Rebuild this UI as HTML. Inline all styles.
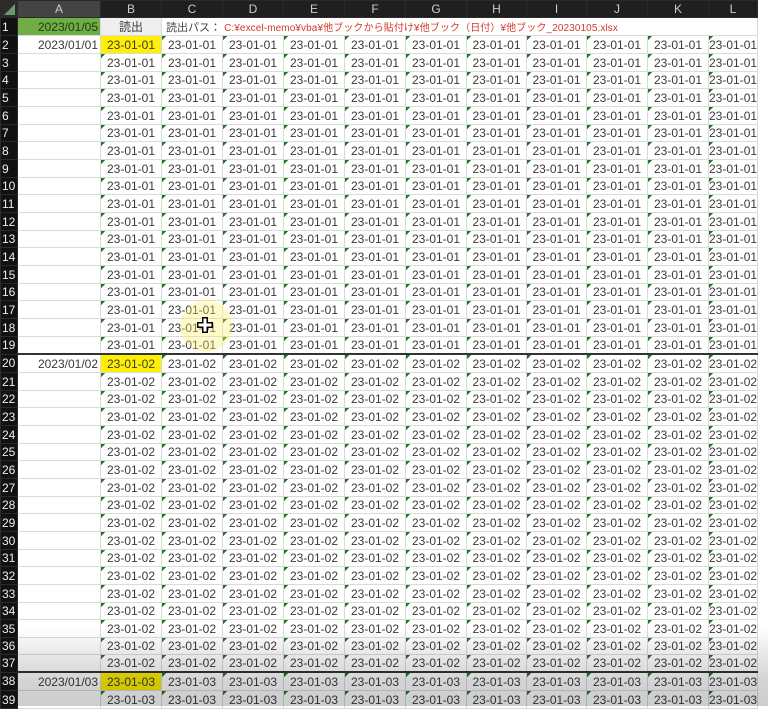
<!DOCTYPE html>
<html><head><meta charset="utf-8"><style>
html,body{margin:0;padding:0;width:768px;height:706px;overflow:hidden;background:#fff}
table{border-collapse:collapse;table-layout:fixed;font:12px "Liberation Sans","Noto Sans CJK JP",sans-serif;color:#3a3a3a;position:absolute;left:0;top:0}
th{background:#111;color:#ddd;font-weight:normal;font-size:12px;padding:0;text-align:center;border:1px solid #2a2a2a}
thead th{height:16px;background:#1f1f1f;color:#ccc}
thead th.a{background:#444}
tbody th{text-align:left;padding-left:1px;color:#eee;font-size:12px}
td{border:1px solid #dadada;padding:0;text-align:center;white-space:nowrap;overflow:hidden;height:16px;
background:linear-gradient(135deg,#1f7a1f 3px,transparent 3px) no-repeat}
td:first-of-type{background:none;text-align:right;padding-right:2px}
tr.t td,tr.t th{height:17px}
td.y{background:#ffef00}
tr.sep td{border-top:2px solid #333}
.r1 td{background:none}
td.g{background:#70ad47!important;color:#1e3a10}
td.b{background:#efefef}
td.p{text-align:left;padding-left:4px;overflow:visible;color:#444;font-size:11px}
.red{color:#d23a2a;font-size:10px;letter-spacing:0.1px}
#shade{position:absolute;left:17px;top:620px;width:751px;height:86px;background:linear-gradient(#fff0 0,#0000 8px,rgba(0,0,0,.08) 30px,rgba(0,0,0,.17) 60px,rgba(0,0,0,.2) 86px);pointer-events:none}
#hl{position:absolute;left:180px;top:300px;width:52px;height:52px;border-radius:50%;background:rgba(255,240,110,.35)}
#cur{position:absolute;left:197px;top:317px}
</style></head><body>
<table>
<colgroup><col style="width:17px"><col style="width:83px"><col style="width:61px"><col style="width:61px"><col style="width:61px"><col style="width:61px"><col style="width:61px"><col style="width:61px"><col style="width:60px"><col style="width:60px"><col style="width:61px"><col style="width:61px"></colgroup>
<thead><tr><th style="background:#2b2b2b"><svg width="14" height="14" style="display:block;margin:0 auto"><polygon points="13,2 13,13 2,13" fill="#6a9a6a"/></svg></th><th class="a">A</th><th>B</th><th>C</th><th>D</th><th>E</th><th>F</th><th>G</th><th>H</th><th>I</th><th>J</th><th>K</th><th>L</th></tr></thead>
<tbody>
<tr class="r1"><th>1</th><td class="g">2023/01/05</td><td class="b">読出</td><td class="p" colspan="10">読出パス： <span class="red">C:¥excel-memo¥vba¥他ブックから貼付け¥他ブック（日付）¥他ブック_20230105.xlsx</span></td></tr>
<tr class="t"><th>2</th><td>2023/01/01</td><td class="y">23-01-01</td><td>23-01-01</td><td>23-01-01</td><td>23-01-01</td><td>23-01-01</td><td>23-01-01</td><td>23-01-01</td><td>23-01-01</td><td>23-01-01</td><td>23-01-01</td><td>23-01-01</td></tr>
<tr class="t"><th>3</th><td></td><td>23-01-01</td><td>23-01-01</td><td>23-01-01</td><td>23-01-01</td><td>23-01-01</td><td>23-01-01</td><td>23-01-01</td><td>23-01-01</td><td>23-01-01</td><td>23-01-01</td><td>23-01-01</td></tr>
<tr><th>4</th><td></td><td>23-01-01</td><td>23-01-01</td><td>23-01-01</td><td>23-01-01</td><td>23-01-01</td><td>23-01-01</td><td>23-01-01</td><td>23-01-01</td><td>23-01-01</td><td>23-01-01</td><td>23-01-01</td></tr>
<tr class="t"><th>5</th><td></td><td>23-01-01</td><td>23-01-01</td><td>23-01-01</td><td>23-01-01</td><td>23-01-01</td><td>23-01-01</td><td>23-01-01</td><td>23-01-01</td><td>23-01-01</td><td>23-01-01</td><td>23-01-01</td></tr>
<tr class="t"><th>6</th><td></td><td>23-01-01</td><td>23-01-01</td><td>23-01-01</td><td>23-01-01</td><td>23-01-01</td><td>23-01-01</td><td>23-01-01</td><td>23-01-01</td><td>23-01-01</td><td>23-01-01</td><td>23-01-01</td></tr>
<tr><th>7</th><td></td><td>23-01-01</td><td>23-01-01</td><td>23-01-01</td><td>23-01-01</td><td>23-01-01</td><td>23-01-01</td><td>23-01-01</td><td>23-01-01</td><td>23-01-01</td><td>23-01-01</td><td>23-01-01</td></tr>
<tr class="t"><th>8</th><td></td><td>23-01-01</td><td>23-01-01</td><td>23-01-01</td><td>23-01-01</td><td>23-01-01</td><td>23-01-01</td><td>23-01-01</td><td>23-01-01</td><td>23-01-01</td><td>23-01-01</td><td>23-01-01</td></tr>
<tr class="t"><th>9</th><td></td><td>23-01-01</td><td>23-01-01</td><td>23-01-01</td><td>23-01-01</td><td>23-01-01</td><td>23-01-01</td><td>23-01-01</td><td>23-01-01</td><td>23-01-01</td><td>23-01-01</td><td>23-01-01</td></tr>
<tr><th>10</th><td></td><td>23-01-01</td><td>23-01-01</td><td>23-01-01</td><td>23-01-01</td><td>23-01-01</td><td>23-01-01</td><td>23-01-01</td><td>23-01-01</td><td>23-01-01</td><td>23-01-01</td><td>23-01-01</td></tr>
<tr class="t"><th>11</th><td></td><td>23-01-01</td><td>23-01-01</td><td>23-01-01</td><td>23-01-01</td><td>23-01-01</td><td>23-01-01</td><td>23-01-01</td><td>23-01-01</td><td>23-01-01</td><td>23-01-01</td><td>23-01-01</td></tr>
<tr class="t"><th>12</th><td></td><td>23-01-01</td><td>23-01-01</td><td>23-01-01</td><td>23-01-01</td><td>23-01-01</td><td>23-01-01</td><td>23-01-01</td><td>23-01-01</td><td>23-01-01</td><td>23-01-01</td><td>23-01-01</td></tr>
<tr><th>13</th><td></td><td>23-01-01</td><td>23-01-01</td><td>23-01-01</td><td>23-01-01</td><td>23-01-01</td><td>23-01-01</td><td>23-01-01</td><td>23-01-01</td><td>23-01-01</td><td>23-01-01</td><td>23-01-01</td></tr>
<tr class="t"><th>14</th><td></td><td>23-01-01</td><td>23-01-01</td><td>23-01-01</td><td>23-01-01</td><td>23-01-01</td><td>23-01-01</td><td>23-01-01</td><td>23-01-01</td><td>23-01-01</td><td>23-01-01</td><td>23-01-01</td></tr>
<tr class="t"><th>15</th><td></td><td>23-01-01</td><td>23-01-01</td><td>23-01-01</td><td>23-01-01</td><td>23-01-01</td><td>23-01-01</td><td>23-01-01</td><td>23-01-01</td><td>23-01-01</td><td>23-01-01</td><td>23-01-01</td></tr>
<tr><th>16</th><td></td><td>23-01-01</td><td>23-01-01</td><td>23-01-01</td><td>23-01-01</td><td>23-01-01</td><td>23-01-01</td><td>23-01-01</td><td>23-01-01</td><td>23-01-01</td><td>23-01-01</td><td>23-01-01</td></tr>
<tr class="t"><th>17</th><td></td><td>23-01-01</td><td>23-01-01</td><td>23-01-01</td><td>23-01-01</td><td>23-01-01</td><td>23-01-01</td><td>23-01-01</td><td>23-01-01</td><td>23-01-01</td><td>23-01-01</td><td>23-01-01</td></tr>
<tr class="t"><th>18</th><td></td><td>23-01-01</td><td>23-01-01</td><td>23-01-01</td><td>23-01-01</td><td>23-01-01</td><td>23-01-01</td><td>23-01-01</td><td>23-01-01</td><td>23-01-01</td><td>23-01-01</td><td>23-01-01</td></tr>
<tr><th>19</th><td></td><td>23-01-01</td><td>23-01-01</td><td>23-01-01</td><td>23-01-01</td><td>23-01-01</td><td>23-01-01</td><td>23-01-01</td><td>23-01-01</td><td>23-01-01</td><td>23-01-01</td><td>23-01-01</td></tr>
<tr class="t sep"><th>20</th><td>2023/01/02</td><td class="y">23-01-02</td><td>23-01-02</td><td>23-01-02</td><td>23-01-02</td><td>23-01-02</td><td>23-01-02</td><td>23-01-02</td><td>23-01-02</td><td>23-01-02</td><td>23-01-02</td><td>23-01-02</td></tr>
<tr class="t"><th>21</th><td></td><td>23-01-02</td><td>23-01-02</td><td>23-01-02</td><td>23-01-02</td><td>23-01-02</td><td>23-01-02</td><td>23-01-02</td><td>23-01-02</td><td>23-01-02</td><td>23-01-02</td><td>23-01-02</td></tr>
<tr><th>22</th><td></td><td>23-01-02</td><td>23-01-02</td><td>23-01-02</td><td>23-01-02</td><td>23-01-02</td><td>23-01-02</td><td>23-01-02</td><td>23-01-02</td><td>23-01-02</td><td>23-01-02</td><td>23-01-02</td></tr>
<tr class="t"><th>23</th><td></td><td>23-01-02</td><td>23-01-02</td><td>23-01-02</td><td>23-01-02</td><td>23-01-02</td><td>23-01-02</td><td>23-01-02</td><td>23-01-02</td><td>23-01-02</td><td>23-01-02</td><td>23-01-02</td></tr>
<tr class="t"><th>24</th><td></td><td>23-01-02</td><td>23-01-02</td><td>23-01-02</td><td>23-01-02</td><td>23-01-02</td><td>23-01-02</td><td>23-01-02</td><td>23-01-02</td><td>23-01-02</td><td>23-01-02</td><td>23-01-02</td></tr>
<tr><th>25</th><td></td><td>23-01-02</td><td>23-01-02</td><td>23-01-02</td><td>23-01-02</td><td>23-01-02</td><td>23-01-02</td><td>23-01-02</td><td>23-01-02</td><td>23-01-02</td><td>23-01-02</td><td>23-01-02</td></tr>
<tr class="t"><th>26</th><td></td><td>23-01-02</td><td>23-01-02</td><td>23-01-02</td><td>23-01-02</td><td>23-01-02</td><td>23-01-02</td><td>23-01-02</td><td>23-01-02</td><td>23-01-02</td><td>23-01-02</td><td>23-01-02</td></tr>
<tr class="t"><th>27</th><td></td><td>23-01-02</td><td>23-01-02</td><td>23-01-02</td><td>23-01-02</td><td>23-01-02</td><td>23-01-02</td><td>23-01-02</td><td>23-01-02</td><td>23-01-02</td><td>23-01-02</td><td>23-01-02</td></tr>
<tr><th>28</th><td></td><td>23-01-02</td><td>23-01-02</td><td>23-01-02</td><td>23-01-02</td><td>23-01-02</td><td>23-01-02</td><td>23-01-02</td><td>23-01-02</td><td>23-01-02</td><td>23-01-02</td><td>23-01-02</td></tr>
<tr class="t"><th>29</th><td></td><td>23-01-02</td><td>23-01-02</td><td>23-01-02</td><td>23-01-02</td><td>23-01-02</td><td>23-01-02</td><td>23-01-02</td><td>23-01-02</td><td>23-01-02</td><td>23-01-02</td><td>23-01-02</td></tr>
<tr class="t"><th>30</th><td></td><td>23-01-02</td><td>23-01-02</td><td>23-01-02</td><td>23-01-02</td><td>23-01-02</td><td>23-01-02</td><td>23-01-02</td><td>23-01-02</td><td>23-01-02</td><td>23-01-02</td><td>23-01-02</td></tr>
<tr><th>31</th><td></td><td>23-01-02</td><td>23-01-02</td><td>23-01-02</td><td>23-01-02</td><td>23-01-02</td><td>23-01-02</td><td>23-01-02</td><td>23-01-02</td><td>23-01-02</td><td>23-01-02</td><td>23-01-02</td></tr>
<tr class="t"><th>32</th><td></td><td>23-01-02</td><td>23-01-02</td><td>23-01-02</td><td>23-01-02</td><td>23-01-02</td><td>23-01-02</td><td>23-01-02</td><td>23-01-02</td><td>23-01-02</td><td>23-01-02</td><td>23-01-02</td></tr>
<tr class="t"><th>33</th><td></td><td>23-01-02</td><td>23-01-02</td><td>23-01-02</td><td>23-01-02</td><td>23-01-02</td><td>23-01-02</td><td>23-01-02</td><td>23-01-02</td><td>23-01-02</td><td>23-01-02</td><td>23-01-02</td></tr>
<tr><th>34</th><td></td><td>23-01-02</td><td>23-01-02</td><td>23-01-02</td><td>23-01-02</td><td>23-01-02</td><td>23-01-02</td><td>23-01-02</td><td>23-01-02</td><td>23-01-02</td><td>23-01-02</td><td>23-01-02</td></tr>
<tr class="t"><th>35</th><td></td><td>23-01-02</td><td>23-01-02</td><td>23-01-02</td><td>23-01-02</td><td>23-01-02</td><td>23-01-02</td><td>23-01-02</td><td>23-01-02</td><td>23-01-02</td><td>23-01-02</td><td>23-01-02</td></tr>
<tr><th>36</th><td></td><td>23-01-02</td><td>23-01-02</td><td>23-01-02</td><td>23-01-02</td><td>23-01-02</td><td>23-01-02</td><td>23-01-02</td><td>23-01-02</td><td>23-01-02</td><td>23-01-02</td><td>23-01-02</td></tr>
<tr><th>37</th><td></td><td>23-01-02</td><td>23-01-02</td><td>23-01-02</td><td>23-01-02</td><td>23-01-02</td><td>23-01-02</td><td>23-01-02</td><td>23-01-02</td><td>23-01-02</td><td>23-01-02</td><td>23-01-02</td></tr>
<tr class="t sep"><th>38</th><td>2023/01/03</td><td class="y">23-01-03</td><td>23-01-03</td><td>23-01-03</td><td>23-01-03</td><td>23-01-03</td><td>23-01-03</td><td>23-01-03</td><td>23-01-03</td><td>23-01-03</td><td>23-01-03</td><td>23-01-03</td></tr>
<tr class="t"><th>39</th><td></td><td>23-01-03</td><td>23-01-03</td><td>23-01-03</td><td>23-01-03</td><td>23-01-03</td><td>23-01-03</td><td>23-01-03</td><td>23-01-03</td><td>23-01-03</td><td>23-01-03</td><td>23-01-03</td></tr>
</tbody></table>
<div id="shade"></div>
<div id="hl"></div>
<svg id="cur" width="16" height="16" viewBox="0 0 16 16"><path d="M5 0H11V5H16V11H11V16H5V11H0V5H5Z" fill="#000"/><path d="M6.5 1.5H9.5V6.5H14.5V9.5H9.5V14.5H6.5V9.5H1.5V6.5H6.5Z" fill="#fff"/></svg>
</body></html>
